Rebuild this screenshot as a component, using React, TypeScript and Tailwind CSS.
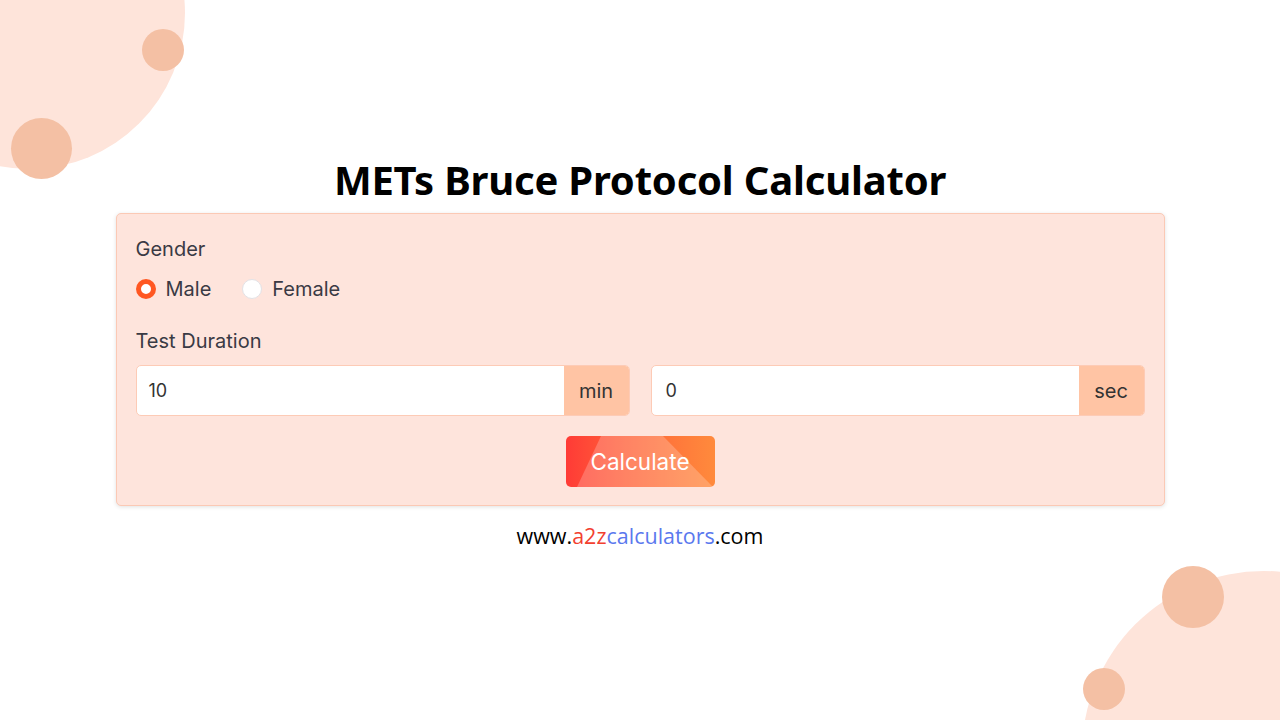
export default function App() {
  return (
    <main className="relative h-[720px] w-[1280px] overflow-hidden bg-white font-['Inter',sans-serif]">
      {/* decorative blobs */}
      <div className="absolute left-[-127px] top-[-143px] h-[312px] w-[312px] rounded-full bg-[#fee4da]" />
      <div className="absolute left-[142px] top-[29px] h-[42px] w-[42px] rounded-full bg-[#f4c0a4]" />
      <div className="absolute left-[11px] top-[118px] h-[61px] w-[61px] rounded-full bg-[#f4c0a4]" />
      <div className="absolute left-[1082px] top-[571px] h-[364px] w-[364px] rounded-full bg-[#fee4da]" />
      <div className="absolute left-[1162px] top-[566px] h-[62px] w-[62px] rounded-full bg-[#f4c0a4]" />
      <div className="absolute left-[1083px] top-[668px] h-[42px] w-[42px] rounded-full bg-[#f4c0a4]" />

      <div className="relative flex flex-col items-center pt-[157px]">
        <h1 className="font-['Noto_Sans',sans-serif] text-[40px] font-bold leading-[46px] tracking-[-0.2px] text-black">
          METs Bruce Protocol Calculator
        </h1>

        <section className="mt-[10px] w-[1049px] rounded-[5px] border border-[#fbc9b5] bg-[#fee4dc] px-[19px] pb-[18px] pt-[21px] shadow-[0_1px_4px_rgba(0,0,0,0.12)]">
          <p className="text-[20px] leading-[28px] text-[#3a3a44]">Gender</p>
          <div className="mt-3 flex items-center text-[20px] leading-[28px] text-[#3a3a44]">
            <label className="flex items-center">
              <span className="h-[20px] w-[20px] rounded-full border-[5px] border-[#ff5722] bg-white" />
              <span className="ml-[10px]">Male</span>
            </label>
            <label className="ml-[31px] flex items-center">
              <span className="h-[20px] w-[20px] rounded-full border border-[#e2e2e6] bg-white" />
              <span className="ml-[10px]">Female</span>
            </label>
          </div>

          <p className="mt-6 text-[20px] leading-[28px] text-[#3a3a44]">Test Duration</p>
          <div className="mt-[10px] flex gap-[21px]">
            <div className="flex h-[51px] flex-1 overflow-hidden rounded-[5px] border border-[#fdcbb6] bg-white">
              <div className="flex flex-1 items-center pl-[12px] text-[18px] text-[#333]">10</div>
              <div className="flex w-[65px] items-center justify-center bg-[#ffc4a4] text-[20px] text-[#333]">min</div>
            </div>
            <div className="flex h-[51px] flex-1 overflow-hidden rounded-[5px] border border-[#fdcbb6] bg-white">
              <div className="flex flex-1 items-center pl-[14px] text-[18px] text-[#333]">0</div>
              <div className="flex w-[65px] items-center justify-center bg-[#ffc4a4] text-[20px] text-[#333]">sec</div>
            </div>
          </div>

          <div className="mt-[20px] flex justify-center">
            <button className="relative h-[51px] w-[149px] overflow-hidden rounded-[5px] bg-gradient-to-r from-[#ff3a36] to-[#ff8a3c] text-[22.5px] text-white">
              <svg className="absolute inset-0" width="149" height="51" viewBox="0 0 149 51">
                <polygon points="35,0 97,0 147,51 11,51" fill="rgba(255,255,255,0.22)" />
              </svg>
              <span className="relative">Calculate</span>
            </button>
          </div>
        </section>

        <p className="mt-[15px] font-['Open_Sans',sans-serif] text-[21.5px] leading-[30px] text-black">
          www.<span className="text-[#f2402f]">a2z</span>
          <span className="text-[#5a78ee]">calculators</span>.com
        </p>
      </div>
    </main>
  );
}
